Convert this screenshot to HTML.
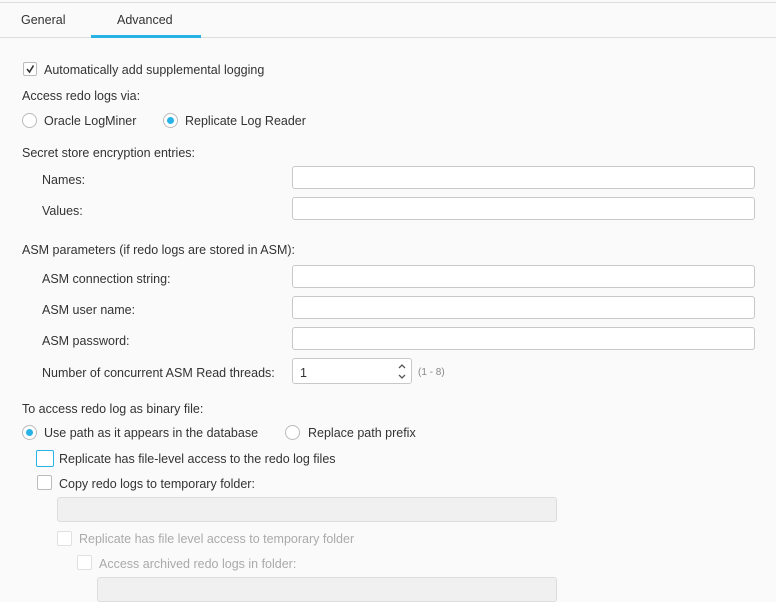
<!DOCTYPE html><html><head><style>
body{margin:0;width:776px;height:590px;background:#fafafa;font-family:"Liberation Sans",sans-serif;font-size:12.5px;color:#333;position:relative;overflow:hidden}
.a{position:absolute;white-space:nowrap;margin-top:1px}
.in{position:absolute;height:23px;background:#fff;border:1px solid #c8c8c8;border-radius:3px;box-sizing:border-box}
.dis{background:#f0f0f0;border-color:#ddd}
.cb{position:absolute;width:14px;height:14px;border:1px solid #bbb;background:#fff;border-radius:2px;box-sizing:border-box}
.rb{position:absolute;width:15px;height:15px;border:1px solid #bbb;background:#fff;border-radius:50%;box-sizing:border-box}
.rb.on::after{content:"";position:absolute;left:3px;top:3px;width:7px;height:7px;border-radius:50%;background:#29b2e6}
.g{color:#aaa}
</style></head><body>
<div class="a" style="left:0;top:1px;width:776px;height:1px;background:#ddd"></div>
<div class="a" style="left:0;top:36px;width:776px;height:1px;background:#ddd"></div>
<div class="a" style="left:91px;top:34px;width:110px;height:3px;background:#29b2e6"></div>
<div class="a" style="left:21px;top:12px">General</div>
<div class="a" style="left:117px;top:12px">Advanced</div>

<div class="cb" style="left:23px;top:62px"></div>
<svg class="a" style="left:25px;top:64px;margin:0" width="10" height="10"><path d="M2 5 L4.5 8 L8.5 1.5" stroke="#333" stroke-width="1.6" fill="none"/></svg>
<div class="a" style="left:44px;top:62px">Automatically add supplemental logging</div>
<div class="a" style="left:22px;top:88px">Access redo logs via:</div>
<div class="rb" style="left:22px;top:113px"></div><div class="a" style="left:44px;top:113px">Oracle LogMiner</div>
<div class="rb on" style="left:163px;top:113px"></div><div class="a" style="left:185px;top:113px">Replicate Log Reader</div>
<div class="a" style="left:22px;top:145px">Secret store encryption entries:</div>
<div class="a" style="left:42px;top:172px">Names:</div><div class="in" style="left:292px;top:166px;width:463px"></div>
<div class="a" style="left:42px;top:203px">Values:</div><div class="in" style="left:292px;top:197px;width:463px"></div>
<div class="a" style="left:22px;top:242px">ASM parameters (if redo logs are stored in ASM):</div>
<div class="a" style="left:42px;top:271px">ASM connection string:</div><div class="in" style="left:292px;top:265px;width:463px"></div>
<div class="a" style="left:42px;top:302px">ASM user name:</div><div class="in" style="left:292px;top:296px;width:463px"></div>
<div class="a" style="left:42px;top:333px">ASM password:</div><div class="in" style="left:292px;top:327px;width:463px"></div>
<div class="a" style="left:42px;top:365px">Number of concurrent ASM Read threads:</div>
<div class="in" style="left:292px;top:358px;width:120px;height:26px"></div>
<div class="a" style="left:300px;top:365px">1</div>
<svg class="a" style="left:397px;top:362px;margin:0" width="10" height="20"><path d="M2 6 L5 3 L8 6 M2 13 L5 16 L8 13" stroke="#555" stroke-width="1.3" fill="none"/></svg>
<div class="a" style="left:418px;top:366px;font-size:10px;color:#888">(1 - 8)</div>
<div class="a" style="left:22px;top:401px">To access redo log as binary file:</div>
<div class="rb on" style="left:22px;top:425px"></div><div class="a" style="left:44px;top:425px">Use path as it appears in the database</div>
<div class="rb" style="left:285px;top:425px"></div><div class="a" style="left:308px;top:425px">Replace path prefix</div>
<div class="cb" style="left:36px;top:450px;width:18px;height:17px;border-color:#29b2e6"></div>
<div class="a" style="left:59px;top:451px">Replicate has file-level access to the redo log files</div>
<div class="cb" style="left:37px;top:475px;width:15px;height:15px"></div>
<div class="a" style="left:59px;top:476px">Copy redo logs to temporary folder:</div>
<div class="in dis" style="left:57px;top:497px;width:500px;height:25px"></div>
<div class="cb" style="left:57px;top:531px;border-color:#e0e0e0;width:15px;height:15px"></div>
<div class="a g" style="left:79px;top:531px">Replicate has file level access to temporary folder</div>
<div class="cb" style="left:77px;top:555px;border-color:#e0e0e0;width:15px;height:15px"></div>
<div class="a g" style="left:99px;top:556px">Access archived redo logs in folder:</div>
<div class="in dis" style="left:97px;top:577px;width:460px;height:25px"></div>
</body></html>
